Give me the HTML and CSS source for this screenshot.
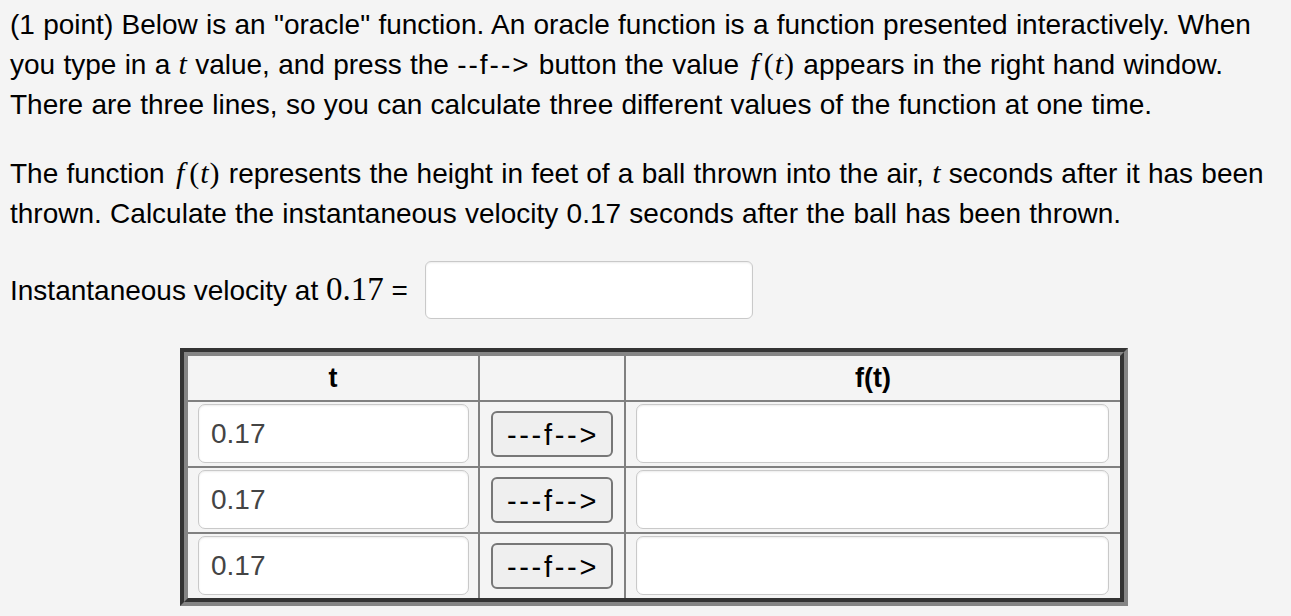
FILE: index.html
```html
<!DOCTYPE html>
<html>
<head>
<meta charset="utf-8">
<link rel="stylesheet" href="styles.css">
</head>
<body>
<div class="page">
  <p class="para first">(1 point) Below is an "oracle" function. An oracle function is a function presented interactively. When<br>you type in a <span class="mi">t</span> value, and press the <span class="arrow">--f--&gt;</span> button the value <span class="math fx"><span class="mi">f</span><span class="mo">(</span><span class="mi">t</span><span class="mo">)</span></span> appears in the right hand window.<br>There are three lines, so you can calculate three different values of the function at one time.</p>
  <p class="para second">The function <span class="math fx"><span class="mi">f</span><span class="mo">(</span><span class="mi">t</span><span class="mo">)</span></span> represents the height in feet of a ball thrown into the air, <span class="mi">t</span> seconds after it has been<br>thrown. Calculate the instantaneous velocity 0.17 seconds after the ball has been thrown.</p>
  <div class="answer-row">
    <span class="label">Instantaneous velocity at <span class="num">0.17</span> =</span>
    <input class="answer" type="text">
  </div>
  <div class="oracle-outer">
    <table class="oracle">
      <tr class="head">
        <th class="c1">t</th>
        <th class="c2"></th>
        <th class="c3">f(t)</th>
      </tr>
      <tr>
        <td class="c1"><input class="tin" type="text" value="0.17"></td>
        <td class="c2"><button class="fbtn">---f--&gt;</button></td>
        <td class="c3"><input class="fout" type="text"></td>
      </tr>
      <tr>
        <td class="c1"><input class="tin" type="text" value="0.17"></td>
        <td class="c2"><button class="fbtn">---f--&gt;</button></td>
        <td class="c3"><input class="fout" type="text"></td>
      </tr>
      <tr class="last">
        <td class="c1"><input class="tin" type="text" value="0.17"></td>
        <td class="c2"><button class="fbtn">---f--&gt;</button></td>
        <td class="c3"><input class="fout" type="text"></td>
      </tr>
    </table>
  </div>
</div>
</body>
</html>
```
FILE: styles.css
```css
html, body {
  margin: 0;
  padding: 0;
  background: #f4f4f4;
}
body {
  font-family: "Liberation Sans", Arial, Helvetica, sans-serif;
  font-size: 28px;
  color: #000;
}
.page {
  padding: 5px 0 0 10px;
}
.para {
  margin: 0;
  line-height: 40px;
  white-space: nowrap;
  word-spacing: 0.5px;
}
.first {
  margin-bottom: 29px;
}
.second {
  margin-bottom: 27px;
}
.arrow {
  letter-spacing: 2px;
}
.mi {
  font-family: "Liberation Serif", "Times New Roman", serif;
  font-style: italic;
  font-size: 30px;
  line-height: 1;
}
.mo {
  font-family: "Liberation Serif", "Times New Roman", serif;
  font-size: 30px;
  line-height: 1;
}
.fx .mi:first-child {
  padding: 0 4px 0 3px;
}
.fx .mo {
  padding: 0 1px;
}
.answer-row {
  display: flex;
  align-items: center;
  height: 58px;
}
.label {
  white-space: nowrap;
}
.num {
  font-family: "Liberation Serif", "Times New Roman", serif;
  font-size: 33px;
  line-height: 1;
}
.answer {
  margin-left: 17px;
  width: 328px;
  height: 58px;
  box-sizing: border-box;
  border: 1px solid #c9c9c9;
  border-radius: 6px;
  background: #fff;
  box-shadow: inset 0 1px 2px rgba(0, 0, 0, 0.08);
}
.oracle-outer {
  margin: 29px 0 0 170px;
  width: 948px;
  box-sizing: border-box;
  border-style: solid;
  border-width: 4px;
  border-color: #333 #858585 #858585 #333;
}
.oracle {
  width: 940px;
  border-collapse: separate;
  border-spacing: 0;
  border-style: solid;
  border-width: 4px;
  border-color: #858585 #333 #333 #858585;
  box-sizing: border-box;
}
.oracle th, .oracle td {
  padding: 0;
  border-right: 2px solid #808080;
  border-bottom: 2px solid #808080;
  text-align: center;
  vertical-align: middle;
}
.oracle .c3 {
  border-right: none;
}
.oracle tr.last td {
  border-bottom: none;
}
.oracle th {
  height: 44px;
  font-size: 27px;
  font-weight: bold;
}
.oracle td {
  height: 64px;
}
.oracle .c1 { width: 292px; box-sizing: border-box; }
.oracle .c2 { width: 146px; box-sizing: border-box; }
.tin, .fout {
  display: block;
  height: 59px;
  box-sizing: border-box;
  border: 1px solid #c9c9c9;
  border-radius: 7px;
  background: #fff;
  box-shadow: inset 0 1px 2px rgba(0, 0, 0, 0.08);
  font-family: "Liberation Sans", Arial, sans-serif;
  font-size: 28px;
  color: #444;
  padding: 0 0 0 12px;
}
.tin {
  width: 271px;
  margin: 0 0 1px 10px;
}
.fout {
  width: 473px;
  margin: 0 0 1px 10px;
}
.fbtn {
  display: block;
  margin: 0 auto;
  width: 122px;
  height: 46px;
  box-sizing: border-box;
  border: 2px solid #777;
  border-radius: 6px;
  background: #efefef;
  font-family: "Liberation Sans", Arial, sans-serif;
  font-size: 29px;
  letter-spacing: 2.7px;
  color: #000;
  padding: 2px 0 0 2px;
}
```
